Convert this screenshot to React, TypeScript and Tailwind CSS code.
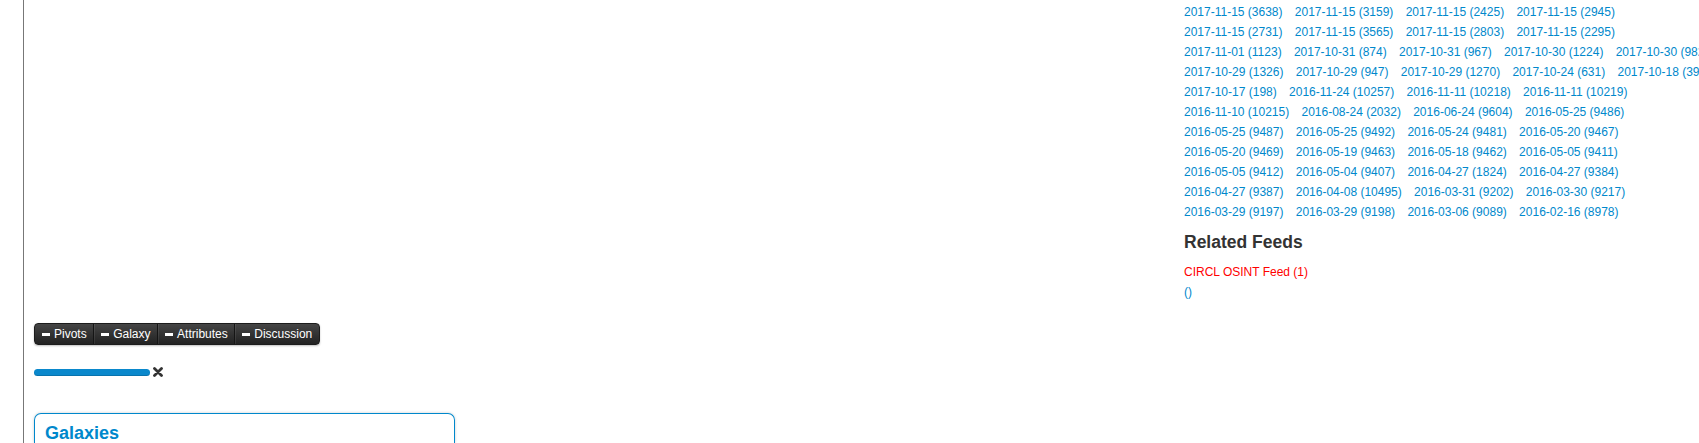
import React from 'react';

const relatedEvents = [
  '2017-11-15 (3638)', '2017-11-15 (3159)', '2017-11-15 (2425)', '2017-11-15 (2945)',
  '2017-11-15 (2731)', '2017-11-15 (3565)', '2017-11-15 (2803)', '2017-11-15 (2295)',
  '2017-11-01 (1123)', '2017-10-31 (874)', '2017-10-31 (967)', '2017-10-30 (1224)', '2017-10-30 (982)',
  '2017-10-29 (1326)', '2017-10-29 (947)', '2017-10-29 (1270)', '2017-10-24 (631)', '2017-10-18 (391)',
  '2017-10-17 (198)', '2016-11-24 (10257)', '2016-11-11 (10218)', '2016-11-11 (10219)',
  '2016-11-10 (10215)', '2016-08-24 (2032)', '2016-06-24 (9604)', '2016-05-25 (9486)',
  '2016-05-25 (9487)', '2016-05-25 (9492)', '2016-05-24 (9481)', '2016-05-20 (9467)',
  '2016-05-20 (9469)', '2016-05-19 (9463)', '2016-05-18 (9462)', '2016-05-05 (9411)',
  '2016-05-05 (9412)', '2016-05-04 (9407)', '2016-04-27 (1824)', '2016-04-27 (9384)',
  '2016-04-27 (9387)', '2016-04-08 (10495)', '2016-03-31 (9202)', '2016-03-30 (9217)',
  '2016-03-29 (9197)', '2016-03-29 (9198)', '2016-03-06 (9089)', '2016-02-16 (8978)',
];

const toggles = ['Pivots', 'Galaxy', 'Attributes', 'Discussion'];

function TimesIcon() {
  return (
    <svg width="10" height="10" viewBox="0 0 10 10" className="block">
      <path d="M1.5 1.5 L8.5 8.5 M8.5 1.5 L1.5 8.5" stroke="#333" strokeWidth="2.8" strokeLinecap="round" />
    </svg>
  );
}

export default function App() {
  return (
    <div className="flex h-[443px] w-[1699px] overflow-hidden bg-white font-['Liberation_Sans',Arial,sans-serif] text-[12px] leading-[20px] text-[#333]">
      <div className="w-[24px] shrink-0 border-r border-[#777]" />

      <div className="flex w-[1160px] shrink-0 flex-col pl-[10px] pt-[323px]">
        <div className="flex h-[24px] w-fit overflow-hidden rounded-[4px] border border-[#1c1c1c] bg-gradient-to-b from-[#454545] to-[#222] shadow-[0_1px_2px_rgba(0,0,0,0.25)]">
          {toggles.map((t, i) => (
            <button
              key={t}
              className={`flex items-center gap-[4px] pl-[7px] pr-[6.5px] text-[12px] leading-none text-white ${i > 0 ? 'border-l border-[#151515] shadow-[inset_1px_0_0_rgba(255,255,255,0.08)]' : ''}`}
            >
              <span className="h-[3px] w-[8px] bg-white" />
              {t}
            </button>
          ))}
        </div>

        <div className="mt-[22px] flex items-center gap-[3px]">
          <div className="h-[7px] w-[116px] rounded-full bg-[#0a88cc] shadow-[inset_0_-1px_0_rgba(0,0,0,0.15)]" />
          <TimesIcon />
        </div>

        <div className="mt-[36px] w-[421px] flex-1 rounded-t-[7px] border border-b-0 border-[#0088cc] px-[10px] pt-[9px] shadow-[0_0_3px_rgba(0,0,0,0.2)]">
          <h3 className="text-[18px] font-bold leading-[20px] text-[#0088cc]">Galaxies</h3>
        </div>
      </div>

      <div className="w-[530px] shrink-0 pt-[2px]">
        <div className="flex flex-wrap gap-x-[12.3px]">
          {relatedEvents.map((e) => (
            <a key={e} className="whitespace-nowrap text-[#0088cc]">
              {e}
            </a>
          ))}
        </div>
        <h4 className="my-[10px] text-[17.5px] font-bold leading-[20px] text-[#333]">Related Feeds</h4>
        <div className="text-[#ff0000]">CIRCL OSINT Feed (1)</div>
        <div className="text-[#0088cc]">()</div>
      </div>
    </div>
  );
}
